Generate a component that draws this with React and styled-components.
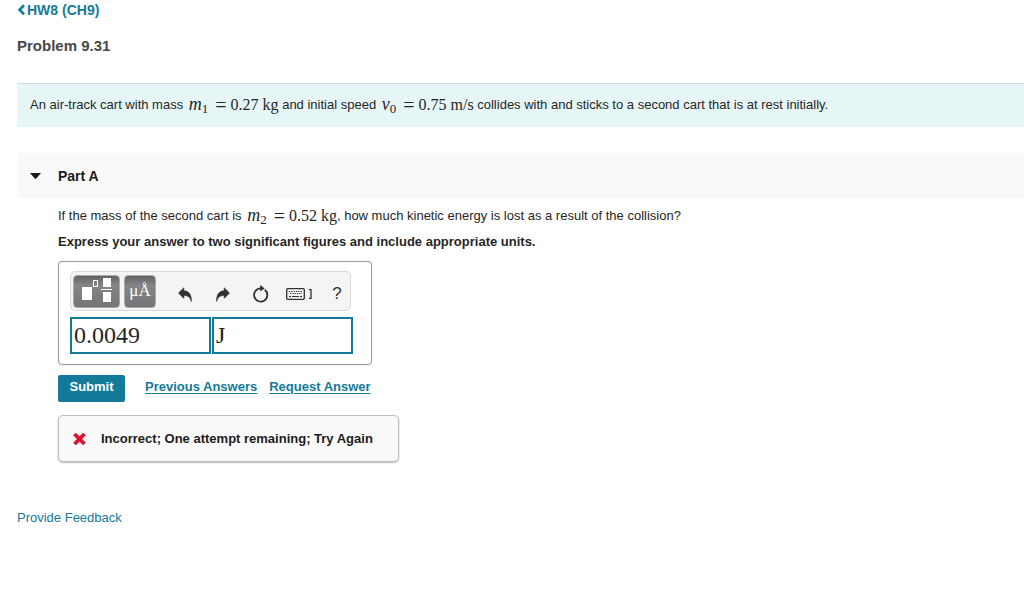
import React from "react";
import styled, { createGlobalStyle } from "styled-components";

const teal = "#147a99";

const GlobalStyle = createGlobalStyle`
  * { box-sizing: border-box; }
  body {
    margin: 0;
    background: #fff;
    color: #262626;
    font-family: "Liberation Sans", Arial, sans-serif;
    font-size: 13px;
    line-height: 20px;
  }
`;

const Page = styled.main`
  padding-left: 17px;
`;

const BackLink = styled.a`
  display: flex;
  align-items: center;
  gap: 2px;
  width: fit-content;
  color: ${teal};
  font-size: 14px;
  font-weight: bold;
  text-decoration: none;
`;

const Title = styled.h1`
  margin: 16px 0 27px;
  color: #484848;
  font-size: 15px;
  line-height: 20px;
`;

const Introduction = styled.section`
  padding: 11px 13px 12px;
  border-top: 1px solid #d5d9da;
  background: #e6f6f7;
`;

const Text = styled.p`
  margin: 0;
  line-height: 20px;
`;

const MathText = styled.span`
  margin-left: 2px;
  font-family: "Liberation Serif", "Times New Roman", serif;
  font-size: 16px;
  line-height: 16px;
  vertical-align: -1px;
  white-space: nowrap;
`;

const Variable = styled.i`
  font-size: 18px;
`;

const Subscript = styled.sub`
  font-size: 13px;
  line-height: 0;
  vertical-align: -3px;
`;

const Equals = styled.span`
  margin: 0 4px 0 7px;
  font-size: 20px;
  line-height: 0;
  vertical-align: -2px;
`;

const PartHeader = styled.button`
  display: flex;
  align-items: center;
  gap: 17px;
  width: 100%;
  height: 45px;
  margin-top: 26px;
  padding: 0 13px;
  border: 0;
  background: #f9f9f9;
  color: #1c1c1c;
  font: bold 14px "Liberation Sans", Arial, sans-serif;
  text-align: left;
`;

const PartBody = styled.section`
  display: flex;
  flex-direction: column;
  align-items: flex-start;
  padding: 8px 16px 0 41px;
`;

const Instruction = styled.p`
  margin: 6px 0 9px;
  font-weight: bold;
`;

const AnswerPanel = styled.form`
  display: flex;
  flex-direction: column;
  gap: 6px;
  padding: 9px 18px 10px 11px;
  border: 1px solid #9c9c9c;
  border-radius: 4px;
  box-shadow: 0 0 1px #aaa;
`;

const Toolbar = styled.div`
  display: flex;
  align-items: center;
  width: 281px;
  height: 40px;
  padding-left: 2px;
  border: 1px solid #d8d8d8;
  border-radius: 5px;
  background: #f4f4f4;
`;

const DarkButton = styled.button`
  display: flex;
  flex-shrink: 0;
  align-items: center;
  justify-content: center;
  width: ${(p) => p.$width}px;
  height: 33px;
  margin-right: 4px;
  padding: 0;
  border: 1px solid #a9a9ab;
  border-radius: 4px;
  background: linear-gradient(#626265, #858588 30%, #747477);
  color: #fff;
  font: 17px "Liberation Serif", serif;
`;

const ToolButton = styled.button`
  display: flex;
  align-items: center;
  justify-content: center;
  width: 26px;
  height: 32px;
  padding: 6px 0 0;
  border: 0;
  background: transparent;
  color: #303030;
  font: 17px "Liberation Sans", Arial, sans-serif;
`;

const Tools = styled.div`
  display: flex;
  gap: 12px;
  margin-left: auto;
`;

const Fields = styled.div`
  display: flex;
  gap: 1px;
`;

const Field = styled.input`
  width: 141px;
  height: 37px;
  padding: 0 2px;
  border: 2px solid ${teal};
  border-radius: 0;
  background: #fff;
  color: #262626;
  font: 24px "Liberation Serif", "Times New Roman", serif;
  outline: 0;
`;

const Actions = styled.div`
  display: flex;
  align-items: center;
  gap: 12px;
  margin-top: 10px;
`;

const Submit = styled.button`
  width: 67px;
  height: 27px;
  margin-right: 8px;
  padding: 0 0 4px;
  border: 0;
  border-radius: 2px;
  background: ${teal};
  color: #fff;
  font: bold 13px "Liberation Sans", Arial, sans-serif;
`;

const ActionLink = styled.a`
  padding-bottom: 3px;
  color: ${teal};
  font-weight: bold;
  text-underline-offset: 2px;
`;

const Feedback = styled.div`
  display: flex;
  align-items: center;
  gap: 14px;
  min-width: 341px;
  height: 47px;
  margin-top: 13px;
  padding: 0 13px;
  border: 1px solid #bdbdbd;
  border-radius: 5px;
  background: #f9f9f9;
  box-shadow: 0 1px 2px #bbb;
  color: #1c1c1c;
  font-weight: bold;
`;

const FooterLink = styled.a`
  display: block;
  width: fit-content;
  margin-top: 46px;
  color: ${teal};
  text-decoration: none;
`;

function Quantity({ symbol, index, value }) {
  return (
    <MathText>
      <Variable>{symbol}</Variable>
      <Subscript>{index}</Subscript>
      <Equals>=</Equals>
      {value}
    </MathText>
  );
}

function TemplatesIcon() {
  return (
    <svg width="32" height="26" viewBox="0 0 32 26" fill="#fff" aria-hidden="true">
      <rect x="1" y="9" width="10" height="13" />
      <rect x="12.5" y="2.5" width="4" height="6" fill="none" stroke="#fff" />
      <rect x="22" y="0" width="8" height="9" />
      <rect x="20" y="11" width="11" height="1" />
      <rect x="22" y="14" width="8" height="10" />
    </svg>
  );
}

function ArrowIcon({ forward }) {
  return (
    <svg width="14" height="15" viewBox="0 0 14 15" aria-hidden="true">
      <path
        d={
          forward
            ? "M13.5 6 8.2 .8v3C3.5 3.8.4 7 .6 14.4 2 10 4.1 8.6 8.2 8.5v2.9z"
            : "M.5 6 5.8.8v3c4.7 0 7.8 3.2 7.6 10.6C12 10 9.9 8.6 5.8 8.5v2.9z"
        }
        fill="#303030"
        stroke="#303030"
        strokeWidth=".6"
      />
    </svg>
  );
}

function ResetIcon() {
  return (
    <svg width="16" height="18" viewBox="0 0 16 18" aria-hidden="true">
      <path d="M11.8 4.8A6.6 6.6 0 1 1 7.8 3.4" fill="none" stroke="#303030" strokeWidth="1.8" />
      <path d="M7.2 0v6.6l4.5-3.1z" fill="#303030" />
    </svg>
  );
}

function KeyboardIcon() {
  return (
    <svg width="26" height="12" viewBox="0 0 26 12" fill="none" stroke="#303030" aria-hidden="true">
      <rect x=".7" y=".7" width="17.6" height="10.6" rx="1" strokeWidth="1.3" />
      <path d="M3 3.5h13M4 5.5h12" strokeDasharray="1.3 1" />
      <path d="M3 8.5h2M6 8.5h7M14 8.5h2" strokeWidth="1.2" />
      <path d="M23 1.7h2v8.6h-2" strokeWidth="1.3" />
    </svg>
  );
}

export default function App() {
  return (
    <>
      <GlobalStyle />
      <Page>
        <BackLink href="#assignment">
          <svg width="8" height="12" viewBox="0 0 8 12" aria-hidden="true">
            <path d="M7 1.2 2.6 5.8 7 10.4" fill="none" stroke={teal} strokeWidth="2.7" />
          </svg>
          HW8 (CH9)
        </BackLink>
        <Title>Problem 9.31</Title>
        <Introduction>
          <Text>
            An air-track cart with mass <Quantity symbol="m" index="1" value="0.27 kg" /> and initial
            speed <Quantity symbol="v" index="0" value="0.75 m/s" /> collides with and sticks to a
            second cart that is at rest initially.
          </Text>
        </Introduction>
        <PartHeader type="button" aria-expanded="true">
          <svg width="11" height="6" viewBox="0 0 11 6" aria-hidden="true">
            <path d="M0 0h11L6.3 5.4Q5.5 6 4.7 5.4z" fill="#1c1c1c" />
          </svg>
          Part A
        </PartHeader>
        <PartBody>
          <Text>
            If the mass of the second cart is <Quantity symbol="m" index="2" value="0.52 kg" />, how
            much kinetic energy is lost as a result of the collision?
          </Text>
          <Instruction>
            Express your answer to two significant figures and include appropriate units.
          </Instruction>
          <AnswerPanel onSubmit={(e) => e.preventDefault()}>
            <Toolbar role="toolbar" aria-label="Answer tools">
              <DarkButton type="button" $width={47} aria-label="Templates">
                <TemplatesIcon />
              </DarkButton>
              <DarkButton type="button" $width={32}>
                μÅ
              </DarkButton>
              <Tools>
                <ToolButton type="button" aria-label="Undo">
                  <ArrowIcon />
                </ToolButton>
                <ToolButton type="button" aria-label="Redo">
                  <ArrowIcon forward />
                </ToolButton>
                <ToolButton type="button" aria-label="Reset">
                  <ResetIcon />
                </ToolButton>
                <ToolButton type="button" aria-label="Keyboard shortcuts">
                  <KeyboardIcon />
                </ToolButton>
                <ToolButton type="button">?</ToolButton>
              </Tools>
            </Toolbar>
            <Fields>
              <Field aria-label="Value" defaultValue="0.0049" />
              <Field aria-label="Units" defaultValue="J" />
            </Fields>
          </AnswerPanel>
          <Actions>
            <Submit type="button">Submit</Submit>
            <ActionLink href="#previous">Previous Answers</ActionLink>
            <ActionLink href="#request">Request Answer</ActionLink>
          </Actions>
          <Feedback role="status">
            <svg width="15" height="14" viewBox="0 0 15 14" aria-hidden="true">
              <path d="m2.5 2 10 10m0-10-10 10" stroke="#d9122d" strokeWidth="3.8" />
            </svg>
            Incorrect; One attempt remaining; Try Again
          </Feedback>
        </PartBody>
        <FooterLink href="#feedback">Provide Feedback</FooterLink>
      </Page>
    </>
  );
}
